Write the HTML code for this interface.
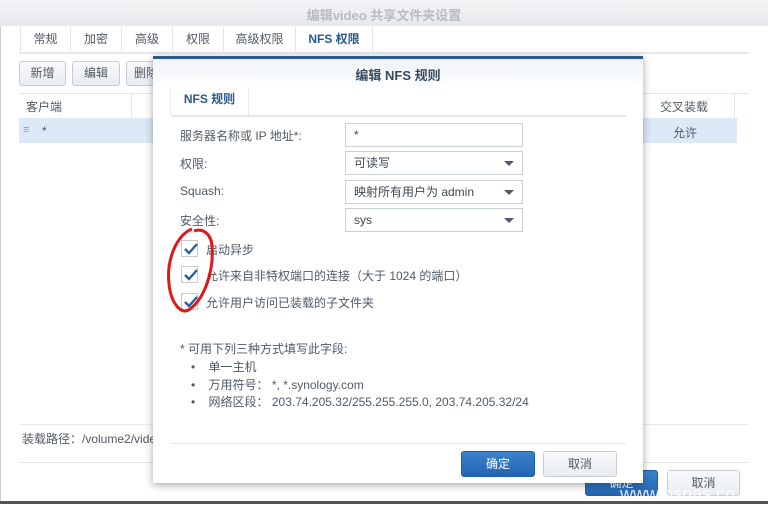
<!DOCTYPE html>
<html><head><meta charset="utf-8"><style>
*{margin:0;padding:0;box-sizing:border-box}
body{width:768px;height:504px;overflow:hidden;background:#fff;font-family:"Liberation Sans","Noto Sans CJK SC",sans-serif;font-size:12px;color:#505a64;position:relative}
.a{position:absolute}
.btn{position:absolute;border:1px solid #c6ccd4;border-radius:3px;background:linear-gradient(#f8f9fb,#e8ecf0);text-align:center;color:#505a64}
.btnb{position:absolute;border:1px solid #1f5fa8;border-radius:3px;background:linear-gradient(#3b82cc,#2565b3);text-align:center;color:#fff}
.inp{position:absolute;left:345px;width:178px;height:24px;border:1px solid #c9d0d8;background:#fff;padding-left:8px;line-height:22px;color:#404850}
.tri{position:absolute;right:8px;top:9px;width:0;height:0;border-left:5px solid transparent;border-right:5px solid transparent;border-top:5px solid #505a64}
.cb{position:absolute;left:181px;width:17px;height:17px;border:1px solid #c3cbd4;background:#fff}
.cb svg{position:absolute;left:1px;top:0}
.lbl{position:absolute;left:180px}
</style></head><body>
<div class="a" style="left:0;top:0;width:768px;height:26px;background:linear-gradient(#f4f5f7,#e6e8eb)"></div>
<div class="a" style="left:0;top:5px;width:768px;text-align:center;color:#b8bcc2;font-size:13px;font-weight:bold">编辑video 共享文件夹设置</div>
<div class="a" style="left:0;top:26px;width:1px;height:478px;background:#ccc"></div>
<div class="a" style="left:20px;top:27px;height:25px;display:flex;font-size:12px">
<div style="width:50px;border-left:1px solid #e3e6ea;text-align:center;line-height:20px;padding-top:2px">常规</div>
<div style="width:51px;border-left:1px solid #e3e6ea;text-align:center;line-height:20px;padding-top:2px">加密</div>
<div style="width:51px;border-left:1px solid #e3e6ea;text-align:center;line-height:20px;padding-top:2px">高级</div>
<div style="width:51px;border-left:1px solid #e3e6ea;text-align:center;line-height:20px;padding-top:2px">权限</div>
<div style="width:72px;border-left:1px solid #e3e6ea;text-align:center;line-height:20px;padding-top:2px">高级权限</div>
<div style="width:78px;border-left:1px solid #e3e6ea;border-right:1px solid #e3e6ea;text-align:center;line-height:20px;padding-top:2px;font-weight:bold;color:#2a5a8c">NFS 权限</div>
</div>
<div class="a" style="left:19px;top:52px;width:730px;height:2px;background:#e6e8eb"></div>
<div class="btn" style="left:19px;top:61px;width:47px;height:25px;line-height:23px">新增</div>
<div class="btn" style="left:72px;top:61px;width:48px;height:25px;line-height:23px">编辑</div>
<div class="btn" style="left:126px;top:61px;width:40px;height:25px;line-height:23px">删除</div>
<div class="a" style="left:19px;top:93px;width:730px;height:1px;background:#e3e8ee"></div>
<div class="a" style="left:26px;top:98px">客户端</div>
<div class="a" style="left:131px;top:94px;width:1px;height:24px;background:#e3e8ee"></div>
<div class="a" style="left:734px;top:94px;width:1px;height:24px;background:#e3e8ee"></div>
<div class="a" style="left:660px;top:98px">交叉装载</div>
<div class="a" style="left:19px;top:118px;width:718px;height:25px;background:#dde9f7"></div>
<div class="a" style="left:23px;top:124px;color:#99a;font-size:11px">≡</div>
<div class="a" style="left:42px;top:124px">*</div>
<div class="a" style="left:673px;top:124px">允许</div>
<div class="a" style="left:19px;top:424px;width:730px;height:1px;background:#eaedf0"></div>
<div class="a" style="left:22px;top:430px">装载路径：/volume2/video</div>
<div class="a" style="left:19px;top:462px;width:730px;height:1px;background:#e2e5e9"></div>
<div class="btnb" style="left:585px;top:470px;width:73px;height:26px;line-height:24px">确定</div>
<div class="btn" style="left:667px;top:470px;width:73px;height:26px;line-height:24px">取消</div>
<div class="a" style="left:0;top:501px;width:768px;height:3px;background:#555"></div>
<div class="a" style="left:620px;top:484px;color:#fff;font-size:18px;opacity:.85">www.osnas.co</div>

<div class="a" style="left:153px;top:56px;width:490px;height:427px;background:#fff;border-top:3px solid #2d5a8e;box-shadow:0 2px 8px rgba(0,0,0,.35)">
<div style="height:30px;background:linear-gradient(#eef2f7,#fff)"></div>
</div>
<div class="a" style="left:153px;top:65px;width:490px;text-align:center;font-size:13px;font-weight:bold;color:#3a4a5c">编辑 NFS 规则</div>
<div class="a" style="left:170px;top:88px;width:79px;height:27px;border-left:1px solid #e6e9ed;border-right:1px solid #e6e9ed;text-align:center;line-height:22px;font-weight:bold;color:#2a5a8c">NFS 规则</div>
<div class="a" style="left:171px;top:115px;width:455px;height:2px;background:#e3e6ea"></div>
<div class="lbl" style="top:127px">服务器名称或 IP 地址*:</div>
<div class="lbl" style="top:155px">权限:</div>
<div class="lbl" style="top:184px">Squash:</div>
<div class="lbl" style="top:212px">安全性:</div>
<div class="inp" style="top:123px">*</div>
<div class="inp" style="top:151px">可读写<div class="tri"></div></div>
<div class="inp" style="top:180px">映射所有用户为 admin<div class="tri"></div></div>
<div class="inp" style="top:208px">sys<div class="tri"></div></div>
<div class="cb" style="top:240px"><svg width="15" height="15" viewBox="0 0 15 15"><path d="M2 8 L6 12 L14 3" stroke="#2d5f99" stroke-width="2.4" fill="none"/></svg></div>
<div class="cb" style="top:266px"><svg width="15" height="15" viewBox="0 0 15 15"><path d="M2 8 L6 12 L14 3" stroke="#2d5f99" stroke-width="2.4" fill="none"/></svg></div>
<div class="cb" style="top:293px"><svg width="15" height="15" viewBox="0 0 15 15"><path d="M2 8 L6 12 L14 3" stroke="#2d5f99" stroke-width="2.4" fill="none"/></svg></div>
<div class="a" style="left:206px;top:241px">启动异步</div>
<div class="a" style="left:206px;top:267px">允许来自非特权端口的连接（大于 1024 的端口）</div>
<div class="a" style="left:206px;top:294px">允许用户访问已装载的子文件夹</div>
<div class="a" style="left:180px;top:340px">* 可用下列三种方式填写此字段:</div>
<div class="a" style="left:191px;top:358px">•&nbsp;&nbsp;&nbsp;&nbsp;单一主机</div>
<div class="a" style="left:191px;top:376px">•&nbsp;&nbsp;&nbsp;&nbsp;万用符号：&nbsp;*, *.synology.com</div>
<div class="a" style="left:191px;top:393px">•&nbsp;&nbsp;&nbsp;&nbsp;网络区段：&nbsp;203.74.205.32/255.255.255.0, 203.74.205.32/24</div>
<div class="a" style="left:171px;top:443px;width:455px;height:1px;background:#e3e6ea"></div>
<div class="btnb" style="left:461px;top:451px;width:74px;height:26px;line-height:24px">确定</div>
<div class="btn" style="left:543px;top:451px;width:74px;height:26px;line-height:24px">取消</div>
<svg class="a" style="left:0;top:0" width="768" height="504"><path d="M192 229 C178 234 166 258 169 284 C171 304 182 316 190 309 C205 298 214 270 212 246 C211 233 202 228 194 231" stroke="#e01818" stroke-width="3" fill="none"/></svg>
</body></html>
